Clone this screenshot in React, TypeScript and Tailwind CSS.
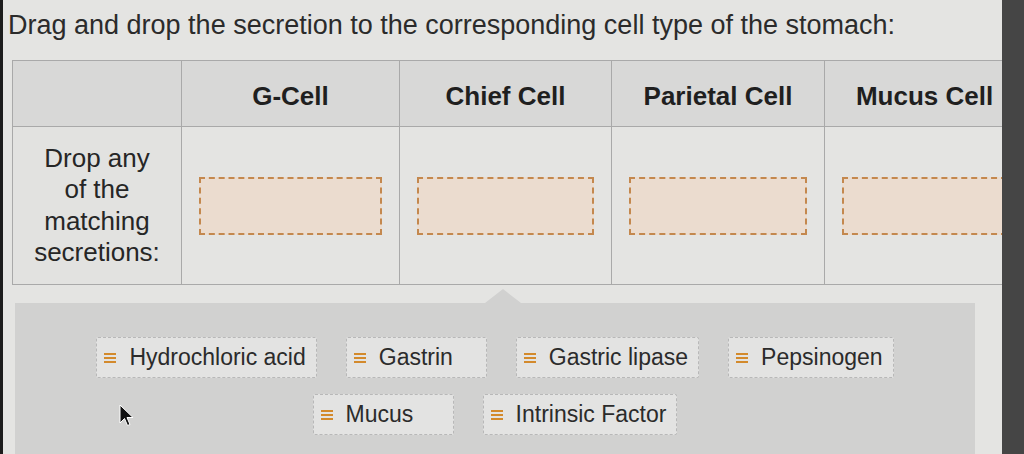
import type React from 'react';

const cells = ['G-Cell', 'Chief Cell', 'Parietal Cell', 'Mucus Cell'];
const secretions = [
  'Hydrochloric acid',
  'Gastrin',
  'Gastric lipase',
  'Pepsinogen',
  'Mucus',
  'Intrinsic Factor',
];

const GripIcon: React.FC = () => (
  <svg width="12" height="12" viewBox="0 0 12 12" className="shrink-0">
    <rect x="0" y="1" width="12" height="2" fill="#d38a2c" />
    <rect x="0" y="5" width="12" height="2" fill="#d38a2c" />
    <rect x="0" y="9" width="12" height="2" fill="#d38a2c" />
  </svg>
);

const App: React.FC = () => {
  return (
    <div className="flex h-[454px] w-[1024px] overflow-hidden bg-[#2b2b2b] font-['Liberation_Sans',Arial,sans-serif]">
      {/*left bezel*/}
      <div className="w-[3px] bg-[#1c1c1c]" />
      <div className="relative flex-1 overflow-hidden bg-[#e4e4e2]">
        {/*title*/}
        <h1 className="pl-[5px] pt-[9px] text-[27px] leading-[32px] text-[#2b2b2b] whitespace-nowrap">
          Drag and drop the secretion to the corresponding cell type of the stomach:
        </h1>
        {/*table*/}
        <div className="ml-[9px] mt-[19px] grid w-[1012px] grid-cols-[169px_218px_212px_213px_200px] border-l border-t border-[#a9a9a9]">
          <div className="h-[66px] border-b border-r border-[#a9a9a9] bg-[#d8d8d7]" />
          {cells.map(c => (
            <div
              key={c}
              className="flex h-[66px] items-center justify-center border-b border-r border-[#a9a9a9] bg-[#d8d8d7] pt-[6px] text-[26px] font-bold text-[#1f1f1f]"
            >
              {c}
            </div>
          ))}
          <div className="flex h-[158px] items-center justify-center border-b border-r border-[#a9a9a9] bg-[#e2e2e0] text-center text-[26px] leading-[31.5px] text-[#262626]">
            <p>
              Drop any
              <br />
              of the
              <br />
              matching
              <br />
              secretions:
            </p>
          </div>
          {cells.map(c => (
            <div
              key={c}
              className="flex h-[158px] items-center border-b border-r border-[#a9a9a9] bg-[#e4e4e2] px-[17px]"
            >
              <div className="h-[58px] w-full border-2 border-dashed border-[#c4884e] bg-[#ebdccf]" />
            </div>
          ))}
        </div>
        {/*answer bank*/}
        <div className="relative ml-[12px] mt-[18px] h-[200px] w-[960px] bg-[#d1d1d0] px-[40px] pt-[34px]">
          <div className="absolute left-[470px] top-[-14px] h-0 w-0 border-x-[18px] border-b-[14px] border-x-transparent border-b-[#d1d1d0]" />
          <div className="flex flex-wrap justify-center gap-x-[29px] gap-y-[16px]">
            {secretions.map(s => (
              <div
                key={s}
                className="flex h-[41px] min-w-[141px] items-center gap-[13px] rounded-[2px] border border-dashed border-[#b8b8b8] bg-[#e3e3e2] pl-[7px] pr-[10px] text-[23px] text-[#2b2b2b]"
              >
                <GripIcon />
                <span>{s}</span>
              </div>
            ))}
          </div>
        </div>
        {/*mouse pointer*/}
        <svg
          width="16"
          height="24"
          viewBox="0 0 16 24"
          className="absolute left-[116px] top-[404px]"
        >
          <path
            d="M1 1 L1 19 L5.5 14.5 L8.5 21.5 L11 20.5 L8 13.5 L14 13.5 Z"
            fill="#111"
            stroke="#fff"
            strokeWidth="1"
          />
        </svg>
      </div>
      {/*right bezel*/}
      <div className="w-[22px] bg-[#454545]" />
    </div>
  );
};

export default App;
